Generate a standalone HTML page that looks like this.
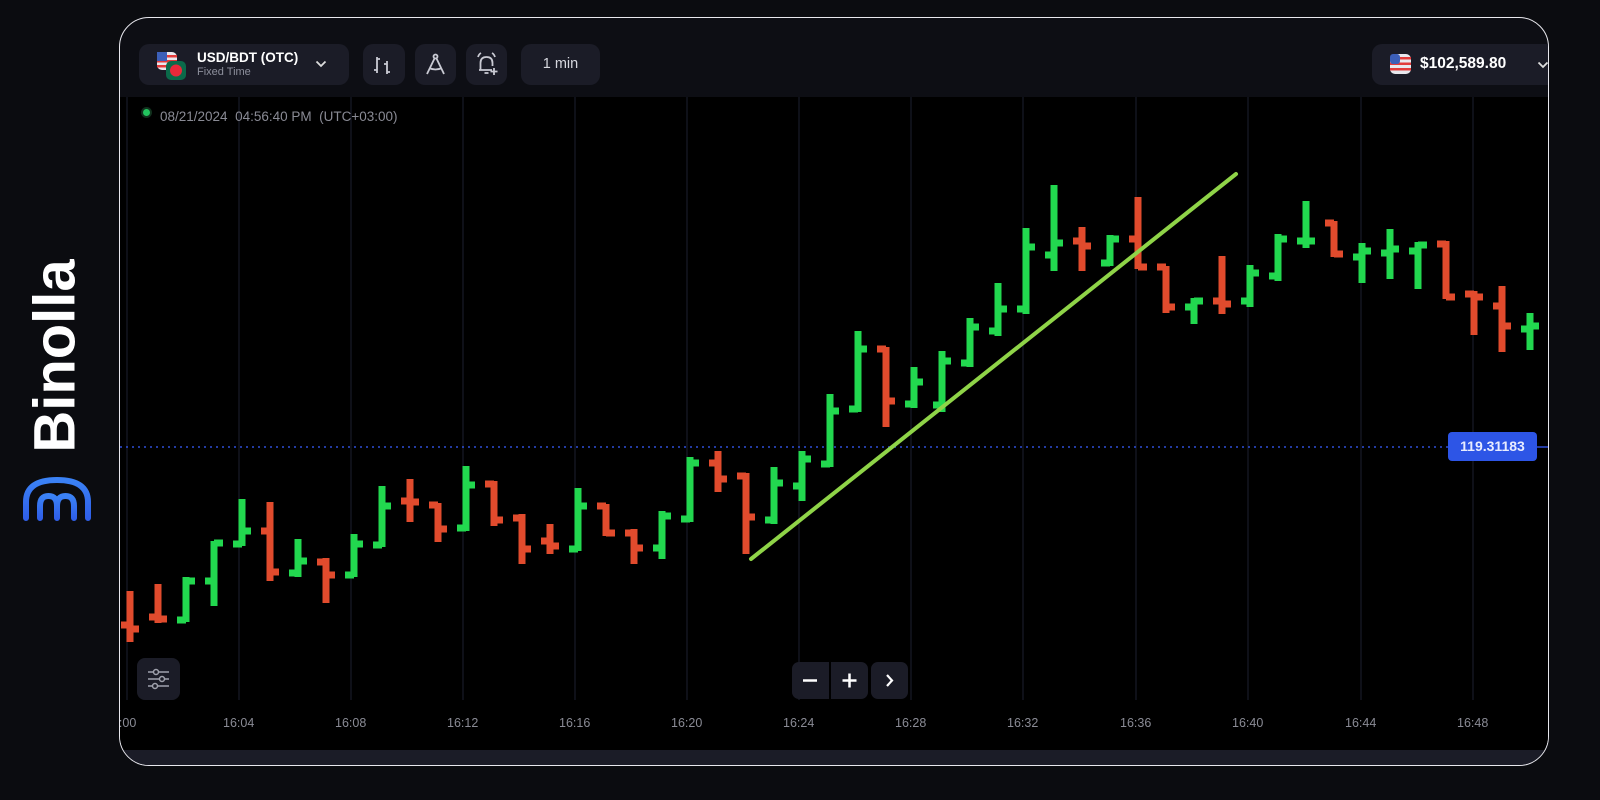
<!DOCTYPE html>
<html><head><meta charset="utf-8"><style>
*{margin:0;padding:0;box-sizing:border-box}
body{width:1600px;height:800px;background:#0b0c10;position:relative;overflow:hidden;font-family:"Liberation Sans",sans-serif}
.card{position:absolute;left:119px;top:17px;width:1430px;height:749px;border:1.5px solid #e8e8ee;border-radius:30px;background:#0d0e14;overflow:hidden}
.chart{position:absolute;left:0;top:79px;width:1430px;height:653px;background:#000}
.strip{position:absolute;left:0;top:732px;width:1430px;height:20px;background:#1b1c27}
.btn{position:absolute;top:26px;height:41px;background:#1b1c27;border-radius:10px;color:#c9cad3}
.logo{position:absolute;left:55px;top:356px;transform:translate(-50%,-50%) rotate(-90deg);color:#fff;font-weight:bold;font-size:58px;letter-spacing:0px;white-space:nowrap}
</style></head><body>
<div class="logo">Binolla</div>
<svg style="position:absolute;left:20px;top:476px" width="74" height="46" viewBox="0 0 74 46">
<defs><linearGradient id="lg" x1="0" y1="0" x2="0" y2="1"><stop offset="0" stop-color="#3b82f6"/><stop offset="1" stop-color="#2f5fe8"/></linearGradient></defs>
<g fill="none" stroke="url(#lg)" stroke-width="6" stroke-linecap="round">
<path d="M6 42 V26 Q6 4 37 4 Q68 4 68 26 V42"/>
<path d="M20 42 V30 Q20 20 28.5 20 Q37 20 37 30 V42"/>
<path d="M37 30 Q37 20 45.5 20 Q54 20 54 30 V42"/>
</g></svg>

<div class="card">
 <div class="btn" style="left:19px;width:210px">
  <svg style="position:absolute;left:17px;top:7px" width="32" height="30"><rect x="1" y="1" width="20" height="18" rx="5" fill="#e8e8ee"/><rect x="1" y="4" width="20" height="2.5" fill="#e23b3b"/><rect x="1" y="9" width="20" height="2.5" fill="#e23b3b"/><rect x="1" y="14" width="20" height="2.5" fill="#e23b3b"/><rect x="1" y="1" width="10" height="9" fill="#3c5fb8"/><rect x="10" y="10" width="20" height="19" rx="5" fill="#0b6a4a"/><circle cx="20" cy="19.5" r="6" fill="#e8283a"/></svg>
  <div style="position:absolute;left:58px;top:6px;color:#fff;font-weight:bold;font-size:13.5px">USD/BDT (OTC)</div>
  <div style="position:absolute;left:58px;top:22px;color:#8d8f9c;font-size:11px">Fixed Time</div>
  <svg style="position:absolute;left:176px;top:16px" width="12" height="8"><path d="M1.5 1.5 L6 6 L10.5 1.5" stroke="#ddd" stroke-width="1.8" fill="none"/></svg>
 </div>
 <div class="btn" style="left:243px;width:42px"><svg width="42" height="41"><g stroke="#c9cad3" stroke-width="1.8" fill="none"><path d="M14 13 V29 M11 26 h3 M14 15 h3 M24 17 V30 M21 20 h3 M24 28 h3"/></g></svg></div>
 <div class="btn" style="left:295px;width:41px"><svg width="41" height="41"><g stroke="#c9cad3" stroke-width="1.8" fill="none"><circle cx="20.5" cy="12.5" r="2"/><path d="M19.5 14.5 L12 30 M21.5 14.5 L29 30 M14 24 Q20.5 27 27 24"/></g></svg></div>
 <div class="btn" style="left:346px;width:41px"><svg width="41" height="41"><g stroke="#c9cad3" stroke-width="1.8" fill="none"><path d="M13 26 H26 M14.5 26 V19 Q14.5 13 20.5 13 Q26.5 13 26.5 19 V22 M18.5 29 h4 M12 13 Q13 10 15 9 M29 13 Q28 10 26 9 M28 24 V31 M24.5 27.5 H31.5"/></g></svg></div>
 <div class="btn" style="left:401px;width:79px;text-align:center;line-height:41px;font-size:14.5px;color:#d6d7de">1 min</div>
 <div class="btn" style="left:1252px;width:190px">
  <svg style="position:absolute;left:18px;top:10px" width="22" height="21"><rect x="0" y="0" width="21" height="20" rx="5" fill="#e8e8ee"/><rect x="0" y="3" width="21" height="2.5" fill="#e23b3b"/><rect x="0" y="8.5" width="21" height="2.5" fill="#e23b3b"/><rect x="0" y="14" width="21" height="2.5" fill="#e23b3b"/><rect x="0" y="0" width="10" height="10" rx="3" fill="#3c5fb8"/></svg>
  <div style="position:absolute;left:48px;top:11px;color:#fff;font-weight:bold;font-size:15.5px">$102,589.80</div>
  <svg style="position:absolute;left:165px;top:17px" width="12" height="8"><path d="M1.5 1.5 L6 6 L10.5 1.5" stroke="#ddd" stroke-width="1.8" fill="none"/></svg>
 </div>

 <div class="chart">
 <svg width="1430" height="653" style="position:absolute;left:0;top:0">
  <g stroke="#171826" stroke-width="1.3">
   <path d="M7 0V603 M119 0V603 M231 0V603 M343 0V603 M455 0V603 M567 0V603 M679 0V603 M791 0V603 M903 0V603 M1016 0V603 M1128 0V603 M1241 0V603 M1353 0V603"/>
  </g>
  <path d="M0 350 H1330" stroke="#2f4fd8" stroke-width="1.5" stroke-dasharray="2 4"/>
  <path d="M1410 350 H1430" stroke="#2f4fd8" stroke-width="1.5"/>
  <g transform="translate(-119,-96)" stroke-width="7" fill="none">
  <g stroke="#e14b2d">
   <path d="M129 590V641M120 624H129M129 628H138"/>
   <path d="M157 583V622M148 616H157M157 618H166"/>
   <path d="M269 501V580M260 530H269M269 571H278"/>
   <path d="M325 557V602M316 561H325M325 574H334"/>
   <path d="M409 478V521M400 500H409M409 501H418"/>
   <path d="M437 502V541M428 504H437M437 528H446"/>
   <path d="M493 480V525M484 483H493M493 519H502"/>
   <path d="M521 513V563M512 517H521M521 548H530"/>
   <path d="M549 523V553M540 540H549M549 545H558"/>
   <path d="M605 503V535M596 505H605M605 532H614"/>
   <path d="M633 528V563M624 532H633M633 547H642"/>
   <path d="M717 450V491M708 462H717M717 478H726"/>
   <path d="M745 472V553M736 475H745M745 516H754"/>
   <path d="M885 346V426M876 348H885M885 400H894"/>
   <path d="M1081 226V270M1072 240H1081M1081 245H1090"/>
   <path d="M1137 196V268M1128 238H1137M1137 266H1146"/>
   <path d="M1165 265V312M1156 266H1165M1165 306H1174"/>
   <path d="M1221 255V313M1212 300H1221M1221 303H1230"/>
   <path d="M1333 220V256M1324 222H1333M1333 253H1342"/>
   <path d="M1445 240V298M1436 243H1445M1445 296H1454"/>
   <path d="M1473 290V334M1464 293H1473M1473 296H1482"/>
   <path d="M1501 285V351M1492 305H1501M1501 325H1510"/>
  </g>
  <g stroke="#22d84f">
   <path d="M185 576V621M176 619H185M185 580H194"/>
   <path d="M213 540V605M204 580H213M213 542H222"/>
   <path d="M241 498V545M232 543H241M241 530H250"/>
   <path d="M297 538V576M288 572H297M297 560H306"/>
   <path d="M353 533V576M344 574H353M353 543H362"/>
   <path d="M381 485V546M372 544H381M381 505H390"/>
   <path d="M465 465V530M456 527H465M465 484H474"/>
   <path d="M577 487V550M568 548H577M577 505H586"/>
   <path d="M661 510V558M652 547H661M661 515H670"/>
   <path d="M689 456V521M680 518H689M689 462H698"/>
   <path d="M773 466V523M764 519H773M773 482H782"/>
   <path d="M801 450V500M792 485H801M801 458H810"/>
   <path d="M829 393V466M820 463H829M829 410H838"/>
   <path d="M857 330V411M848 408H857M857 348H866"/>
   <path d="M913 366V407M904 403H913M913 381H922"/>
   <path d="M941 350V411M932 404H941M941 360H950"/>
   <path d="M969 317V366M960 362H969M969 326H978"/>
   <path d="M997 282V335M988 330H997M997 308H1006"/>
   <path d="M1025 227V313M1016 308H1025M1025 246H1034"/>
   <path d="M1053 184V270M1044 254H1053M1053 242H1062"/>
   <path d="M1109 234V265M1100 262H1109M1109 238H1118"/>
   <path d="M1193 297V323M1184 306H1193M1193 300H1202"/>
   <path d="M1249 264V306M1240 300H1249M1249 272H1258"/>
   <path d="M1277 233V280M1268 275H1277M1277 238H1286"/>
   <path d="M1305 200V247M1296 240H1305M1305 240H1314"/>
   <path d="M1361 242V282M1352 256H1361M1361 250H1370"/>
   <path d="M1389 228V278M1380 252H1389M1389 248H1398"/>
   <path d="M1417 241V288M1408 250H1417M1417 244H1426"/>
   <path d="M1529 312V349M1520 328H1529M1529 325H1538"/>
  </g>
  <path d="M750 558 L1235 173" stroke="#8fd448" stroke-width="4" stroke-linecap="round"/>
  </g>
 </svg>
 <div style="position:absolute;left:23px;top:12px;width:7px;height:7px;border-radius:50%;background:#22c55e;box-shadow:0 0 0 2px #11301d"></div>
 <div style="position:absolute;left:40px;top:12px;color:#8a8b95;font-size:13.5px">08/21/2024&nbsp; 04:56:40 PM&nbsp; (UTC+03:00)</div>
 <div style="position:absolute;left:1328px;top:335px;width:89px;height:29px;background:#2d55e6;border-radius:4px;color:#e8ecff;font-size:14px;font-weight:bold;text-align:center;line-height:29px">119.31183</div>
 <div style="position:absolute;left:17px;top:561px;width:43px;height:42px;background:#1b1c27;border-radius:8px">
  <svg width="43" height="42"><g stroke="#a0a2ad" stroke-width="1.5" fill="none"><path d="M11 14H32M11 21H32M11 28H32"/><circle cx="19" cy="14" r="2.5" fill="#1b1c27"/><circle cx="25" cy="21" r="2.5" fill="#1b1c27"/><circle cx="18" cy="28" r="2.5" fill="#1b1c27"/></g></svg>
 </div>
 <div style="position:absolute;left:672px;top:565px;width:37px;height:37px;background:#1b1c27;border-radius:7px 0 0 7px"><svg width="37" height="37"><path d="M11 18.5H25" stroke="#fff" stroke-width="2.5"/></svg></div>
 <div style="position:absolute;left:711px;top:565px;width:37px;height:37px;background:#1b1c27;border-radius:0 7px 7px 0"><svg width="37" height="37"><path d="M11.5 18.5H25.5M18.5 11.5V25.5" stroke="#fff" stroke-width="2.5"/></svg></div>
 <div style="position:absolute;left:751px;top:565px;width:37px;height:37px;background:#1b1c27;border-radius:7px"><svg width="37" height="37"><path d="M16 13L21 18.5L16 24" stroke="#fff" stroke-width="2.2" fill="none"/></svg></div>
 <div style="position:absolute;top:619px;left:0;width:1430px;color:#8a8b95;font-size:12.5px">
  <span style="position:absolute;left:-15px">16:00</span>
  <span style="position:absolute;left:103px">16:04</span>
  <span style="position:absolute;left:215px">16:08</span>
  <span style="position:absolute;left:327px">16:12</span>
  <span style="position:absolute;left:439px">16:16</span>
  <span style="position:absolute;left:551px">16:20</span>
  <span style="position:absolute;left:663px">16:24</span>
  <span style="position:absolute;left:775px">16:28</span>
  <span style="position:absolute;left:887px">16:32</span>
  <span style="position:absolute;left:1000px">16:36</span>
  <span style="position:absolute;left:1112px">16:40</span>
  <span style="position:absolute;left:1225px">16:44</span>
  <span style="position:absolute;left:1337px">16:48</span>
 </div>
 </div>
 <div class="strip"></div>
</div>
</body></html>
